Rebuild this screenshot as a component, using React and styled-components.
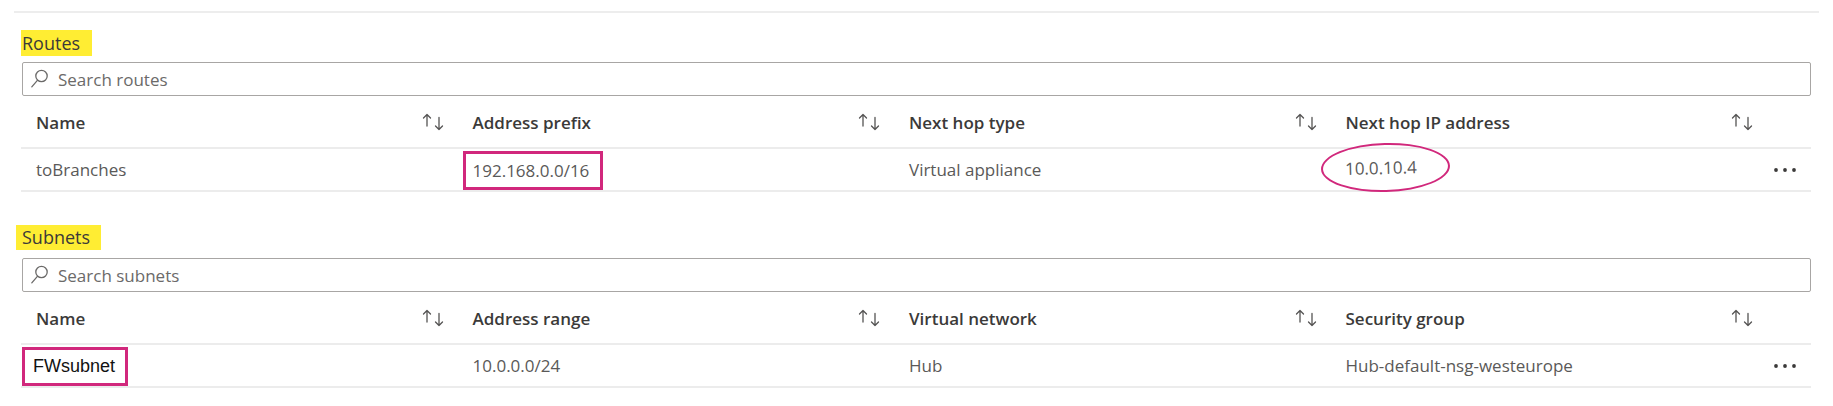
import React from "react";
import styled, { createGlobalStyle } from "styled-components";

const Global = createGlobalStyle`
  html, body { margin: 0; padding: 0; background: #ffffff; }
  body { font-family: "Open Sans", "Noto Sans", Arial, sans-serif; color: #323130; }
`;

const PINK = "#d1287c";

const Page = styled.div`
  width: 1805px;
  padding: 11px 0 0 14px;
  display: flex;
  flex-direction: column;
`;

const TopDivider = styled.div`
  height: 2px;
  background: #ededed;
`;

const Sections = styled.div`
  display: flex;
  flex-direction: column;
  gap: 33px;
  margin: 17px 8px 0 7px;
`;

const Section = styled.section`
  display: flex;
  flex-direction: column;
`;

const TitleRow = styled.div`
  height: ${(p) => p.$h}px;
  display: flex;
  align-items: flex-start;
`;

const Highlight = styled.span`
  display: inline-block;
  background: #ffed33;
  font-size: 18px;
  line-height: ${(p) => p.$lh}px;
  color: #3b3a39;
  padding: 0 ${(p) => p.$pr}px 0 ${(p) => p.$pl}px;
  margin-left: ${(p) => p.$ml}px;
`;

const SearchBox = styled.div`
  height: 34px;
  box-sizing: border-box;
  margin-left: 1px;
  border: 1px solid #a8a6a4;
  border-radius: 2px;
  display: flex;
  align-items: center;
  gap: 10px;
  padding-left: 7px;
  font-size: 17px;
  color: #6b6a69;
`;

const Table = styled.div`
  display: flex;
  flex-direction: column;
`;

const Row = styled.div`
  display: grid;
  grid-template-columns: repeat(4, 1fr) 44px;
  height: ${(p) => (p.$header ? 53 : 43)}px;
  box-sizing: border-box;
  border-bottom: 2px solid #ececec;
`;

const HeadCell = styled.div`
  display: flex;
  align-items: center;
  justify-content: space-between;
  padding: 1px 12px 0 15px;
  font-size: 17px;
  font-weight: 600;
  color: #3b3a39;
`;

const Cell = styled.div`
  display: flex;
  align-items: center;
  padding-left: 15px;
  font-size: 17px;
  color: #5a5958;
  white-space: nowrap;
`;

const ActionCell = styled.div`
  display: flex;
  align-items: center;
  padding-left: 6px;
`;

const BoxMark = styled.span`
  display: inline-flex;
  align-items: center;
  height: 39px;
  box-sizing: border-box;
  border: 3px solid ${PINK};
  padding: 0 ${(p) => p.$pr}px 0 ${(p) => p.$pl}px;
  margin-left: ${(p) => p.$ml}px;
  margin-top: 1px;
  font-family: ${(p) => (p.$arial ? '"Liberation Sans", Arial, sans-serif' : "inherit")};
  font-size: ${(p) => (p.$arial ? 18 : 17)}px;
  color: ${(p) => (p.$arial ? "#111111" : "inherit")};
  background: #ffffff;
`;

const EllipseMark = styled.span`
  display: inline-flex;
  align-items: center;
  height: 49px;
  box-sizing: border-box;
  border: 2.5px solid ${PINK};
  border-radius: 50%;
  padding: 0 31px 0 22px;
  margin: -7px 0 -3px -25px;
  transform: rotate(-1.5deg);
`;

const SortIcon = () => (
  <svg width="24" height="18" viewBox="0 0 24 18" fill="none" stroke="#555453" strokeWidth="1.3" strokeLinecap="round" strokeLinejoin="round">
    <path d="M5 1.5V13M1.5 5L5 1.5L8.5 5" />
    <path d="M17 4.5V16.5M13.5 13L17 16.5L20.5 13" />
  </svg>
);

const SearchIcon = () => (
  <svg width="18" height="20" viewBox="0 0 18 20" fill="none" stroke="#6b6a69" strokeWidth="1.3" strokeLinecap="round">
    <circle cx="11.5" cy="7" r="5.7" />
    <path d="M7.4 11.3L1.8 17.8" />
  </svg>
);

const MoreIcon = () => (
  <svg width="24" height="6" viewBox="0 0 24 6" fill="#3b3a39">
    <circle cx="3" cy="3" r="1.9" />
    <circle cx="12" cy="3" r="1.9" />
    <circle cx="21" cy="3" r="1.9" />
  </svg>
);

const Header = ({ cols }) => (
  <Row $header>
    {cols.map((c) => (
      <HeadCell key={c}>
        <span>{c}</span>
        <SortIcon />
      </HeadCell>
    ))}
    <div />
  </Row>
);

export default function App() {
  return (
    <>
      <Global />
      <Page>
        <TopDivider />
        <Sections>
          <Section>
            <TitleRow $h={32}>
              <Highlight $lh={26} $pl={1} $pr={12} $ml={0}>Routes</Highlight>
            </TitleRow>
            <SearchBox>
              <SearchIcon />
              <span>Search routes</span>
            </SearchBox>
            <Table>
              <Header cols={["Name", "Address prefix", "Next hop type", "Next hop IP address"]} />
              <Row>
                <Cell>toBranches</Cell>
                <Cell>
                  <BoxMark $ml={-10} $pl={7} $pr={11}>192.168.0.0/16</BoxMark>
                </Cell>
                <Cell>Virtual appliance</Cell>
                <Cell>
                  <EllipseMark>10.0.10.4</EllipseMark>
                </Cell>
                <ActionCell>
                  <MoreIcon />
                </ActionCell>
              </Row>
            </Table>
          </Section>
          <Section>
            <TitleRow $h={33}>
              <Highlight $lh={25} $pl={6} $pr={11} $ml={-5}>Subnets</Highlight>
            </TitleRow>
            <SearchBox>
              <SearchIcon />
              <span>Search subnets</span>
            </SearchBox>
            <Table>
              <Header cols={["Name", "Address range", "Virtual network", "Security group"]} />
              <Row>
                <Cell>
                  <BoxMark $arial $ml={-14} $pl={8} $pr={10}>FWsubnet</BoxMark>
                </Cell>
                <Cell>10.0.0.0/24</Cell>
                <Cell>Hub</Cell>
                <Cell>Hub-default-nsg-westeurope</Cell>
                <ActionCell>
                  <MoreIcon />
                </ActionCell>
              </Row>
            </Table>
          </Section>
        </Sections>
      </Page>
    </>
  );
}
